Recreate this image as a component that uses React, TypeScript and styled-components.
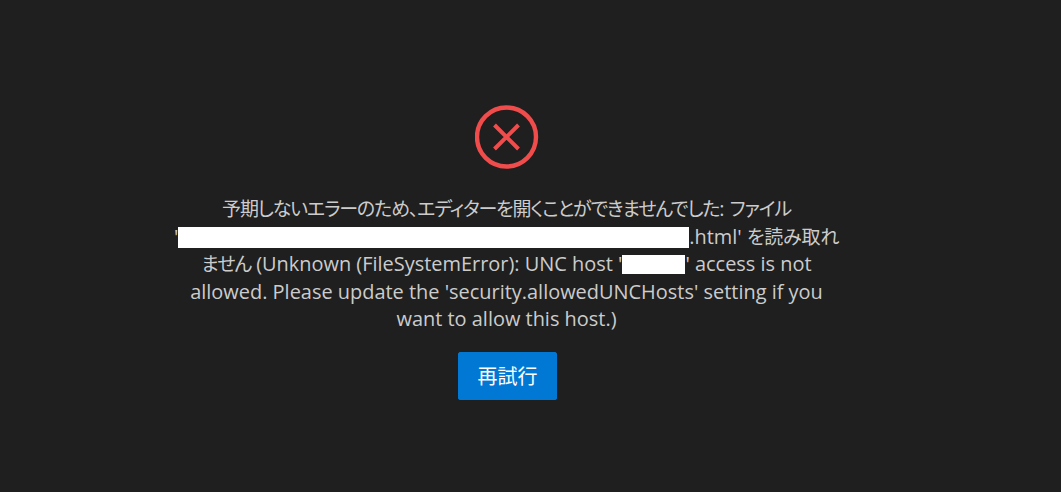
import React from "react";
import styled, { createGlobalStyle } from "styled-components";

const Global = createGlobalStyle`
  html, body { margin: 0; height: 100%; background: #1f1f1f; }
  #root { height: 100%; }
`;

const Page = styled.main`
  box-sizing: border-box;
  width: 100%;
  height: 492px;
  padding: 105px 48px 0 0;
  background: #1f1f1f;
  display: flex;
  flex-direction: column;
  align-items: center;
  overflow: hidden;
`;

const ErrorIcon = styled.svg`
  display: block;
  width: 64px;
  height: 64px;
  flex: none;
`;

const Message = styled.div`
  margin-top: 26px;
  width: 700px;
  text-align: center;
  font-family: "Open Sans", "Noto Sans CJK JP", sans-serif;
  font-size: 19.95px;
  line-height: 27.5px;
  color: #cccccc;
`;

const Line = styled.div`
  white-space: nowrap;
`;

const Jp = styled.span<{ $track: number }>`
  font-family: "Noto Sans CJK JP", sans-serif;
  font-size: 19px;
  line-height: 1;
  font-feature-settings: "palt";
  letter-spacing: ${(p) => p.$track}px;
`;

const Redacted = styled.span<{ $w: number; $h: number; $drop: number }>`
  display: inline-block;
  width: ${(p) => p.$w}px;
  height: ${(p) => p.$h}px;
  background: #ffffff;
  vertical-align: ${(p) => p.$drop}px;
  line-height: 1;
`;

const RetryButton = styled.button`
  margin: 19px 0 0 2px;
  width: 99px;
  height: 48px;
  border: 1px solid #0078d4;
  border-radius: 2px;
  background: #0078d4;
  color: #ffffff;
  font-family: "Noto Sans CJK JP", sans-serif;
  font-size: 20px;
  padding: 0;
`;

export default function App() {
  return (
    <Page>
      <Global />
      <ErrorIcon viewBox="0 0 64 64" aria-hidden="true">
        <circle cx="31.5" cy="32" r="29.5" fill="none" stroke="#f14c4c" strokeWidth="4.4" />
        <path d="M19.5 20 L43.5 44 M43.5 20 L19.5 44" fill="none" stroke="#f14c4c" strokeWidth="4" />
      </ErrorIcon>
      <Message>
        <Line>
          <Jp $track={-1.15}>予期しないエラーのため、エディターを開くことができませんでした</Jp>: <Jp $track={-1.15}>ファイル</Jp>
        </Line>
        <Line>
          '<Redacted $w={511} $h={21} $drop={-4} />.html' <Jp $track={-0.2}>を読み取れ</Jp>
        </Line>
        <Line>
          <Jp $track={-1.15}>ません</Jp> (Unknown (FileSystemError): UNC host '<Redacted $w={63} $h={19} $drop={-3} />' access is not
        </Line>
        <Line>allowed. Please update the 'security.allowedUNCHosts' setting if you</Line>
        <Line>want to allow this host.)</Line>
      </Message>
      <RetryButton>再試行</RetryButton>
    </Page>
  );
}
